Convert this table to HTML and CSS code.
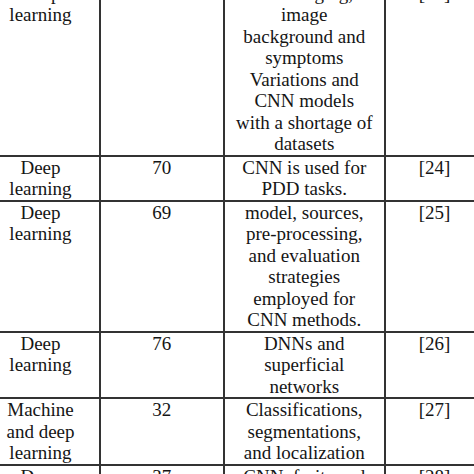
FILE: index.html
```html
<!DOCTYPE html>
<html>
<head>
<meta charset="utf-8">
<link rel="stylesheet" href="styles.css">
</head>
<body>
<table class="survey">
  <colgroup>
    <col class="c-method">
    <col class="c-count">
    <col class="c-focus">
    <col class="c-ref">
  </colgroup>
  <tbody>
    <tr>
      <td>Deep<br>learning</td>
      <td>71</td>
      <td>Challenging,<br>image<br>background and<br>symptoms<br>Variations and<br>CNN models<br>with a shortage of<br>datasets</td>
      <td>[23]</td>
    </tr>
    <tr>
      <td>Deep<br>learning</td>
      <td>70</td>
      <td>CNN is used for<br>PDD tasks.</td>
      <td>[24]</td>
    </tr>
    <tr>
      <td>Deep<br>learning</td>
      <td>69</td>
      <td>model, sources,<br>pre-processing,<br>and evaluation<br>strategies<br>employed for<br>CNN methods.</td>
      <td>[25]</td>
    </tr>
    <tr>
      <td>Deep<br>learning</td>
      <td>76</td>
      <td>DNNs and<br>superficial<br>networks</td>
      <td>[26]</td>
    </tr>
    <tr>
      <td>Machine<br>and deep<br>learning</td>
      <td>32</td>
      <td>Classifications,<br>segmentations,<br>and localization</td>
      <td>[27]</td>
    </tr>
    <tr>
      <td>Deep<br>learning</td>
      <td>37</td>
      <td>CNN, fruits and<br>leaves</td>
      <td>[28]</td>
    </tr>
  </tbody>
</table>
</body>
</html>
```

FILE: styles.css
```css
html, body {
  margin: 0;
  padding: 0;
  background: #ffffff;
  overflow: hidden;
}

body {
  width: 474px;
  height: 474px;
}

.survey {
  border-collapse: collapse;
  table-layout: fixed;
  width: 503px;
  margin: -19.3px 0 0 -19.5px;
  font-family: "Liberation Serif", "Times New Roman", serif;
  font-size: 19px;
  line-height: 21.5px;
  color: #151515;
}

.c-method { width: 118px; }
.c-count { width: 124.5px; }
.c-focus { width: 160.5px; }
.c-ref { width: 100px; }

.survey td {
  border: 2px solid #333333;
  padding: 0;
  text-align: center;
  vertical-align: top;
  white-space: nowrap;
  overflow: visible;
}
```
